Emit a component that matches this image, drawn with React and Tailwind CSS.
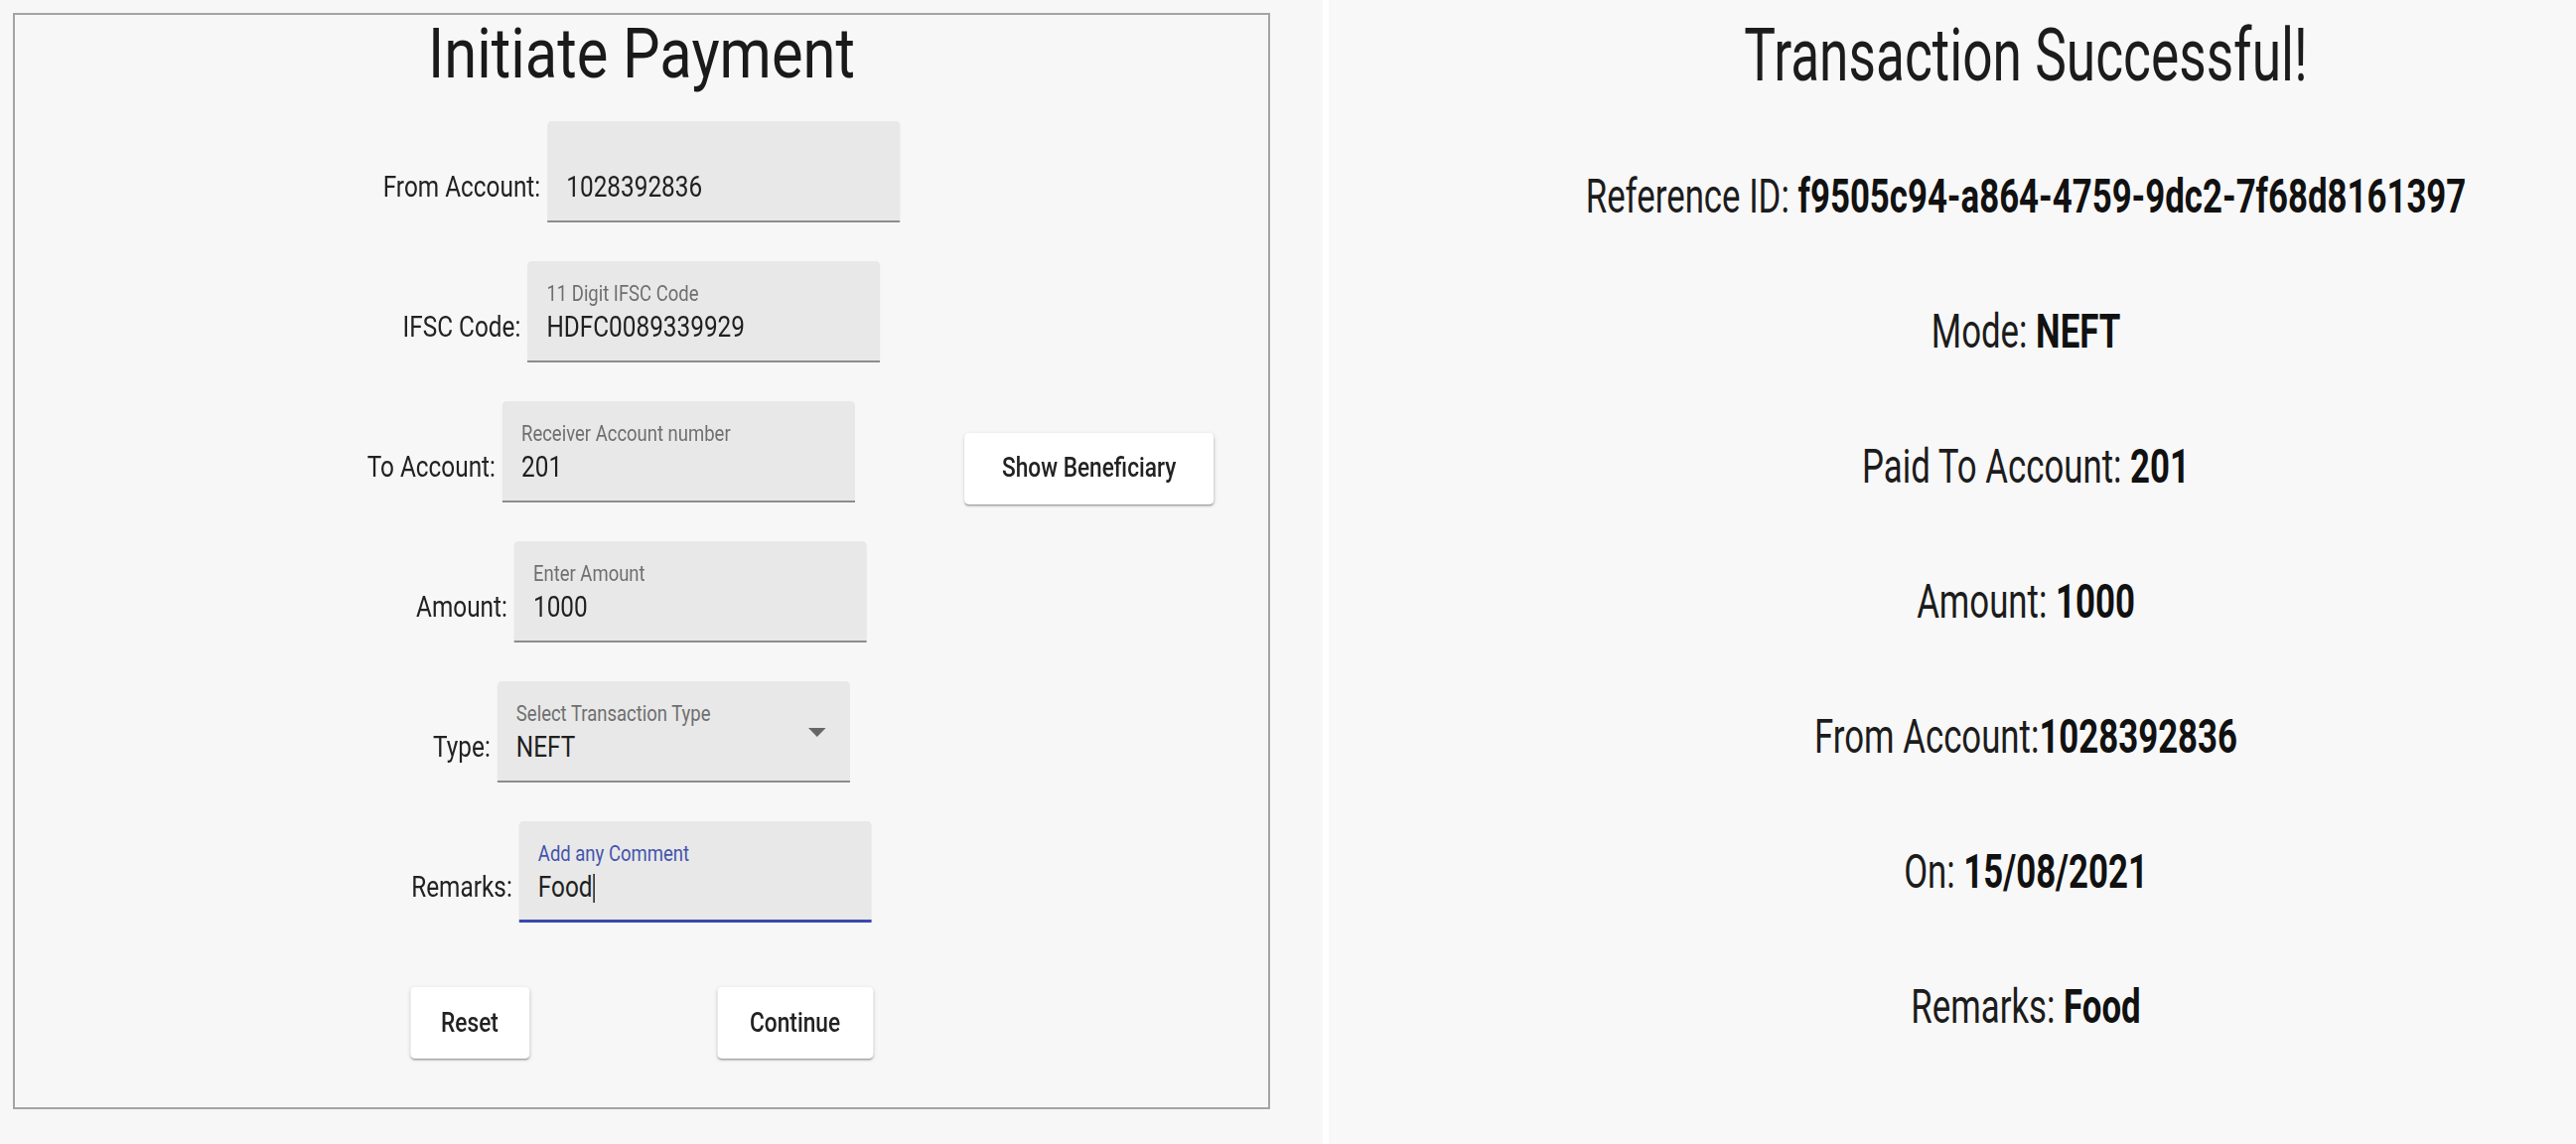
import {useState} from "react";

const raised =
  "bg-white rounded-[5px] shadow-[0_3px_1px_-2px_rgba(0,0,0,0.2),0_2px_2px_0_rgba(0,0,0,0.14),0_1px_5px_0_rgba(0,0,0,0.12)] text-[27px] font-medium leading-none text-[#222] flex items-center justify-center shrink-0 whitespace-nowrap";

const Field = ({label, value, focused, select}) => {
  return (
    <div
      className={
        "relative shrink-0 w-[423px] h-[102px] bg-[#e8e8e8] rounded-t-[5px] pl-[23px] pt-[52px] text-[29px] leading-none text-[#1f1f1f] " +
        (focused ? "border-b-[3px] border-[#3949ab]" : "border-b-2 border-[#8d8d8d]")
      }>
      {label && (
        <span
          className={
            "absolute left-[23px] top-[22px] text-[22px] leading-none whitespace-nowrap " + (focused ? "text-[#4454ac]" : "text-[#6f6f6f]")
          }>
          {label}
        </span>
      )}
      {value}
      {focused && <span className="inline-block w-[2px] h-[29px] bg-[#333] ml-px align-[-6px]" />}
      {select && (
        <svg className="absolute right-[29px] top-[47px] w-[21px] h-[9px]" viewBox="0 0 21 9">
          <path d="M0 0h21L10.5 9z" fill="#666" />
        </svg>
      )}
    </div>
  );
};

const Row = ({title, children, className = "justify-center"}) => (
  <div className={"flex items-baseline " + className}>
    <span className="shrink-0 whitespace-nowrap mr-[8px] text-[29px] leading-none text-[#222]">{title}</span>
    {children}
  </div>
);

const details = [
  ["Reference ID: ", "f9505c94-a864-4759-9dc2-7f68d8161397"],
  ["Mode: ", "NEFT"],
  ["Paid To Account: ", "201"],
  ["Amount: ", "1000"],
  ["From Account:", "1028392836"],
  ["On: ", "15/08/2021"],
  ["Remarks: ", "Food"],
];

const App = () => {
  const [remarks] = useState("Food");

  return (
    <div className="flex w-[2594px] h-[1152px] overflow-hidden bg-white font-['Roboto',sans-serif]">
      {/* initiate payment form */}
      <div className="w-[1332px] shrink-0 bg-[#f7f7f7] pt-[13px] pl-[13px]">
        <div className="w-[1266px] h-[1104px] border-2 border-[#a4a4a4] overflow-hidden">
          <div className="scale-x-[0.84] flex flex-col items-center">
            <h1 className="pt-[3px] text-[71px] leading-none text-[#1a1a1a]">Initiate Payment</h1>
            <div className="mt-[33px] w-full flex flex-col gap-[39px]">
              <Row title="From Account:">
                <Field value="1028392836" />
              </Row>
              <Row title="IFSC Code:">
                <Field label="11 Digit IFSC Code" value="HDFC0089339929" />
              </Row>
              <Row title="To Account:" className="pl-[302px]">
                <Field label="Receiver Account number" value="201" />
                <button className={raised + " ml-[131px] -mb-[2px] w-[299px] h-[72px]"}>Show Beneficiary</button>
              </Row>
              <Row title="Amount:">
                <Field label="Enter Amount" value="1000" />
              </Row>
              <Row title="Type:">
                <Field label="Select Transaction Type" value="NEFT" select />
              </Row>
              <Row title="Remarks:">
                <Field label="Add any Comment" value={remarks} focused />
              </Row>
            </div>
            <div className="mt-[65px] flex justify-center gap-[225px]">
              <button className={raised + " w-[143px] h-[72px]"}>Reset</button>
              <button className={raised + " w-[187px] h-[72px]"}>Continue</button>
            </div>
          </div>
        </div>
      </div>

      <div className="w-[6px] shrink-0 bg-white" />

      {/* success screen */}
      <div className="flex-1 min-w-0 bg-[#f8f8f8] pl-[148px]">
        <div className="scale-x-[0.71] flex flex-col items-center text-[#1c1c1c]">
          <h1 className="pt-[18px] text-[75px] leading-none whitespace-nowrap">Transaction Successful!</h1>
          <div className="mt-[37px] flex flex-col items-center">
            {details.map(([k, v]) => (
              <p key={k} className="text-[49px] leading-[136px] whitespace-nowrap">
                {k}
                <b className="font-bold text-[#111]">{v}</b>
              </p>
            ))}
          </div>
        </div>
      </div>
    </div>
  );
};

export default App;
